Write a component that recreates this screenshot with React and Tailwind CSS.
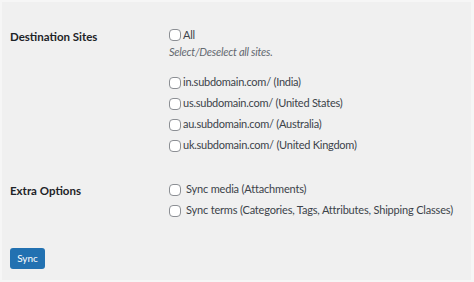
import { useState } from 'react'

const sites = [
  ['in', 'in.subdomain.com/ (India)'],
  ['us', 'us.subdomain.com/ (United States)'],
  ['au', 'au.subdomain.com/ (Australia)'],
  ['uk', 'uk.subdomain.com/ (United Kingdom)'],
]

function Box({ checked, onChange }) {
  return (
    <input
      type="checkbox"
      checked={checked}
      onChange={onChange}
      className="appearance-none w-[12px] h-[12px] rounded-[4px] border border-[#8c8f94] bg-white shrink-0 checked:bg-[#2271b1] checked:border-[#2271b1]"
    />
  )
}

export default function App() {
  const [picked, setPicked] = useState({})
  const [extra, setExtra] = useState({ media: false, terms: false })
  const all = sites.every(([k]) => picked[k])

  const toggleAll = () => {
    const next = {}
    sites.forEach(([k]) => (next[k] = !all))
    setPicked(next)
  }

  return (
    <div className="w-[474px] h-[282px] bg-[#f0f0f0] border-2 border-[#f6f6f6] border-r-[3px] text-[#3c434a] text-[11px] tracking-[-0.25px] font-['Lato',sans-serif] overflow-hidden">
      <div className="grid grid-cols-[159px_1fr] pl-2 pt-[25px]">
        <div className="font-bold text-[#1d2327] text-[11.5px] tracking-normal pt-[1px]">Destination Sites</div>
        <div className="flex flex-col">
          <label className="flex items-center gap-[2px] h-[16px]">
            <Box checked={all} onChange={toggleAll} />
            <span>All</span>
          </label>
          <div className="italic text-[#646970] mt-[1px]">Select/Deselect all sites.</div>
          <div className="flex flex-col gap-[5px] mt-[14px]">
            {sites.map(([k, label]) => (
              <label key={k} className="flex items-center gap-[2px] h-[16px]">
                <Box checked={!!picked[k]} onChange={() => setPicked(p => ({ ...p, [k]: !p[k] }))} />
                <span>{label}</span>
              </label>
            ))}
          </div>
        </div>

        <div className="font-bold text-[#1d2327] text-[11.5px] tracking-normal mt-[28px]">Extra Options</div>
        <div className="flex flex-col gap-[5px] mt-[28px] tracking-[-0.18px]">
          <label className="flex items-center gap-[5px] h-[16px]">
            <Box checked={extra.media} onChange={() => setExtra(e => ({ ...e, media: !e.media }))} />
            <span>Sync media (Attachments)</span>
          </label>
          <label className="flex items-center gap-[5px] h-[16px] whitespace-nowrap">
            <Box checked={extra.terms} onChange={() => setExtra(e => ({ ...e, terms: !e.terms }))} />
            <span>Sync terms (Categories, Tags, Attributes, Shipping Classes)</span>
          </label>
        </div>
      </div>

      <div className="pl-2 mt-[29px]">
        <button className="bg-[#2271b1] text-white rounded-[3px] w-[35px] h-[21px] text-[10px] tracking-normal leading-none">Sync</button>
      </div>
    </div>
  )
}
